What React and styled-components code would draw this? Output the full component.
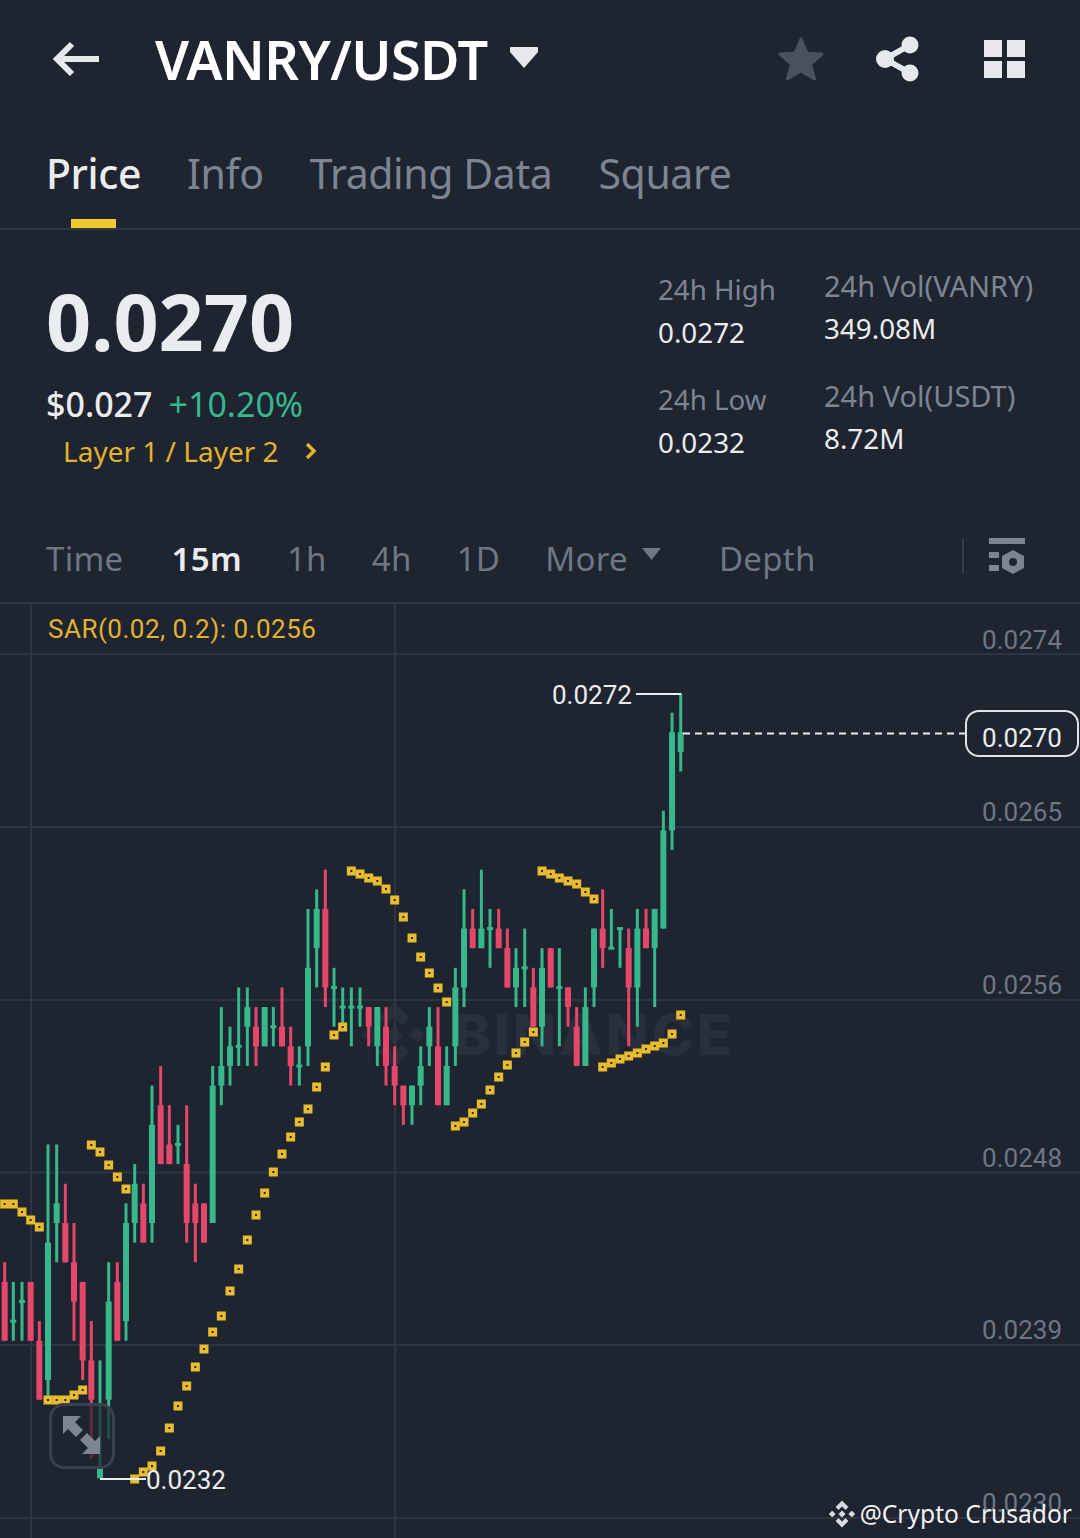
import React from 'react'
import styled, {createGlobalStyle} from 'styled-components'

const BG = '#1e2430'
const LINE = '#2e3440'
const GREEN = '#37b78a'
const RED = '#e5476a'
const DOT = '#e9bb2f'

const Global = createGlobalStyle`
	html, body {
		margin: 0;
		padding: 0;
		background: ${BG};
	}
	* {
		box-sizing: border-box;
	}
`
const Page = styled.div`
	width: 1080px;
	height: 1538px;
	display: flex;
	flex-direction: column;
	overflow: hidden;
	background: ${BG};
	color: #eaecef;
	font-family: 'Noto Sans', sans-serif;
`
const Header = styled.div`
	height: 120px;
	flex: none;
	display: flex;
	align-items: center;
	padding: 0 54px 2px 52px;
`
const Title = styled.div`
	margin-left: 55px;
	font-size: 54px;
	line-height: 60px;
	font-weight: 600;
	color: #fff;
	letter-spacing: -0.6px;
`
const Caret = styled.svg`
	margin-left: ${props => props.$gap}px;
	margin-top: ${props => props.$top}px;
	flex: none;
`
const IconRow = styled.div`
	margin-left: auto;
	display: flex;
	align-items: center;
	gap: 50px;
`
const GridIcon = styled.svg`
	margin-left: 13px;
`
const Tabs = styled.div`
	height: 110px;
	flex: none;
	display: flex;
	gap: 46px;
	padding-left: 46px;
	border-bottom: 2px solid ${LINE};
`
const Tab = styled.div`
	position: relative;
	font-size: 41px;
	line-height: 106px;
	height: 108px;
	font-weight: ${props => (props.$active ? 500 : 400)};
	color: ${props => (props.$active ? '#eaecef' : '#7d8492')};
	letter-spacing: -0.4px;
	${props =>
		props.$active &&
		`&::after {
			content: '';
			position: absolute;
			left: 25px;
			bottom: 0;
			width: 45px;
			height: 9px;
			background: #f0c92e;
		}`}
`
const Summary = styled.div`
	height: 286px;
	flex: none;
	display: flex;
	padding-left: 46px;
`
const PriceCol = styled.div`
	width: 612px;
	flex: none;
`
const BigPrice = styled.div`
	margin-top: 41px;
	font-size: 79px;
	line-height: 100px;
	font-weight: 700;
	color: #eaecef;
`
const SubRow = styled.div`
	margin-top: 11px;
	display: flex;
	gap: 16px;
	font-size: 34px;
	line-height: 44px;
	font-weight: 500;
`
const Change = styled.span`
	color: ${GREEN};
	font-weight: 400;
`
const Sector = styled.div`
	margin: 5px 0 0 17px;
	display: flex;
	align-items: center;
	gap: 26px;
	font-size: 28px;
	line-height: 40px;
	color: #e3b32f;
`
const StatCol = styled.div`
	width: ${props => props.$width}px;
	flex: none;
	padding-top: ${props => props.$top}px;
`
const Stat = styled.div`
	margin-bottom: 24px;
`
const StatLabel = styled.div`
	font-size: ${props => props.$size}px;
	line-height: 43px;
	color: #7d8492;
	white-space: nowrap;
`
const StatValue = styled.div`
	font-size: 27.8px;
	line-height: 43px;
	color: #eaecef;
	white-space: nowrap;
`
const Intervals = styled.div`
	height: 88px;
	flex: none;
	display: flex;
	align-items: center;
	gap: 45px;
	padding: 0 54px 0 46px;
	border-bottom: 2px solid ${LINE};
`
const Interval = styled.div`
	font-size: 33px;
	line-height: 86px;
	font-weight: ${props => (props.$active ? 600 : 400)};
	color: ${props => (props.$active ? '#eaecef' : '#6f7684')};
	letter-spacing: 0.3px;
	display: flex;
	align-items: center;
	margin-left: ${props => props.$shift || 0}px;
`
const Settings = styled.div`
	margin-left: auto;
	display: flex;
	align-items: center;
	gap: 25px;
	margin-top: -6px;
`
const Divider = styled.div`
	width: 2px;
	height: 36px;
	background: #353b47;
`
const Chart = styled.div`
	position: relative;
	flex: 1;
	min-height: 0;
`
const Plot = styled.svg`
	position: absolute;
	left: 0;
	top: 0;
	display: block;
`
const Watermark = styled.div`
	position: absolute;
	left: 358px;
	top: 395px;
	display: flex;
	align-items: center;
	gap: 23px;
	font-family: 'Inter', sans-serif;
	font-size: 57px;
	line-height: 72px;
	font-weight: 800;
	letter-spacing: 2.7px;
	color: #292f3b;
`
const Legend = styled.div`
	position: absolute;
	left: 48px;
	top: 8px;
	font-size: 26px;
	line-height: 34px;
	color: #e3b32f;
	font-family: 'Roboto', sans-serif;
	letter-spacing: 0.5px;
`
const PriceTag = styled.div`
	position: absolute;
	left: 965px;
	top: 106px;
	width: 114px;
	height: 47px;
	border: 2px solid #dfe2e7;
	border-radius: 14px;
	background: ${BG};
	padding-top: 7px;
	text-align: center;
	font-family: 'Roboto', sans-serif;
	font-size: 26px;
	line-height: 38px;
	color: #eaecef;
`
const Expand = styled.div`
	position: absolute;
	left: 49px;
	top: 799px;
	width: 66px;
	height: 66px;
	border: 3px solid #3a404c;
	border-radius: 15px;
	background: rgba(30, 36, 48, 0.72);
	display: flex;
	align-items: center;
	justify-content: center;
`
const Credit = styled.div`
	position: absolute;
	right: 8px;
	bottom: 6px;
	display: flex;
	align-items: center;
	gap: 3px;
	font-size: 24.6px;
	line-height: 36px;
	color: #f0f1f3;
	white-space: nowrap;
`

// price is in ticks of 0.0001
const priceY = p => 693 + (272 - p) * 19.63 - 604
const candleX = i => 48 + 8.667 * i

// g/r, high, body top, body bottom, low, from index -5
const candles = [
	['r', 243, 242, 239, 239],
	['g', 242, 240, 240, 239],
	['g', 242, 241, 241, 239],
	['r', 242, 242, 239, 239],
	['r', 240, 239, 236, 236],
	['g', 249, 244, 237, 236],
	['g', 249, 246, 245, 243],
	['r', 247, 245, 243, 243],
	['r', 245, 243, 241, 239],
	['r', 242, 242, 238, 237],
	['r', 240, 238, 236, 233],
	['g', 238, 232.5, 232, 232],
	['g', 243, 241, 236, 234],
	['r', 243, 242, 239, 239],
	['g', 246, 245, 240, 239],
	['g', 248, 247, 245, 244],
	['r', 247, 246, 244, 244],
	['g', 252, 250, 245, 244],
	['r', 253, 251, 248, 248],
	['r', 251, 249, 248, 248],
	['g', 250, 249, 249, 248],
	['r', 251, 248, 245, 244],
	['r', 247, 246, 245, 243],
	['r', 246, 246, 244, 244],
	['g', 253, 252, 245, 245],
	['g', 256, 253, 252, 251],
	['g', 255, 254, 253, 252],
	['g', 257, 254, 254, 253],
	['g', 257, 256, 255, 253],
	['r', 256, 255, 254, 253],
	['g', 256, 256, 254, 254],
	['g', 256, 255, 255, 254],
	['r', 257, 255, 254, 254],
	['r', 255, 254, 253, 252],
	['g', 254, 253, 253, 252],
	['g', 261, 258, 254, 253],
	['g', 262, 261, 259, 257],
	['r', 263, 261, 257, 256],
	['g', 258, 257, 257, 255],
	['g', 257, 256, 256, 255],
	['g', 257, 256, 256, 254],
	['g', 257, 256, 256, 255],
	['r', 256, 256, 255, 254],
	['g', 256, 256, 254, 253],
	['r', 256, 255, 253, 252],
	['r', 254, 253, 252, 251],
	['r', 252, 252, 251, 250],
	['g', 252, 252, 251, 250],
	['g', 254, 253, 252, 251],
	['g', 256, 255, 254, 253],
	['r', 256, 254, 251, 251],
	['g', 254, 253, 251, 251],
	['g', 258, 257, 254, 253],
	['g', 262, 260, 257, 256],
	['r', 261, 260, 259, 259],
	['g', 263, 260, 259, 259],
	['g', 261, 260, 260, 258],
	['r', 261, 260, 259, 259],
	['r', 260, 259, 257, 257],
	['g', 259, 258, 257, 256],
	['g', 260, 258, 258, 256],
	['r', 258, 257, 255, 255],
	['g', 259, 258, 255, 254],
	['r', 259, 259, 257, 257],
	['g', 259, 257, 257, 254],
	['r', 257, 257, 256, 255],
	['r', 256, 255, 253, 253],
	['g', 257, 256, 253, 253],
	['g', 260, 260, 257, 256],
	['r', 262, 260, 259, 258],
	['g', 261, 259, 259, 259],
	['g', 260, 260, 260, 258],
	['r', 260, 259, 257, 254],
	['g', 261, 260, 257, 255],
	['r', 261, 260, 259, 259],
	['g', 261, 261, 259, 256],
	['g', 266, 265, 260, 260],
	['g', 271, 270, 265, 264],
	['g', 272, 270, 269, 268]
]

// SAR dots by screen y, from index -5
const sar = [
	1204, 1204, 1212, 1220, 1227, 1400, 1400, 1400, 1395, 1390, 1145, 1152, 1165, 1177, 1189, 1479, 1472, 1466, 1451,
	1428, 1406, 1386, 1367, 1349, 1332, 1316, 1291, 1269, 1240, 1215, 1193, 1172, 1154, 1137, 1122, 1109, 1087, 1067,
	1035, 1027, 871, 874, 878, 881, 889, 900, 917, 938, 957, 973, 988, 1002, 1126, 1122, 1113, 1104, 1090, 1077, 1065,
	1053, 1042, 1032, 871, 874, 878, 881, 884, 892, 899, 1067, 1063, 1059, 1056, 1053, 1049, 1046, 1043, 1034, 1015
]

const gridY = [50, 223, 396, 568.5, 741, 914]
const axis = [
	['0.0274', 45],
	['0.0265', 217],
	['0.0256', 390],
	['0.0248', 563],
	['0.0239', 735],
	['0.0230', 908]
]

const Candle = ({index, data}) => {
	const [kind, high, top, bottom, low] = data
	const x = candleX(index)
	const fill = kind === 'g' ? GREEN : RED
	const bodyTop = priceY(top)
	const bodyHeight = Math.max(priceY(bottom) - bodyTop, 3)
	return (
		<g fill={fill}>
			<rect x={x - 1.5} y={priceY(high)} width={3} height={priceY(low) - priceY(high)} />
			<rect x={x - 3} y={top === bottom ? bodyTop - 1.5 : bodyTop} width={6} height={bodyHeight} />
		</g>
	)
}

const BinanceMark = ({size, color}) => (
	<svg width={size} height={size} viewBox="0 0 32 32" fill={color} stroke={color} strokeWidth="0.8">
		<path d="M16 2l6.5 6.5-2.8 2.8L16 7.6l-3.7 3.7-2.8-2.8z" />
		<path d="M16 30l-6.5-6.5 2.8-2.8 3.700 3.700 3.700-3.700 2.800 2.800z" />
		<path d="M5.6 12.8l3.2 3.2-3.2 3.2L2.4 16z" />
		<path d="M26.4 12.8l3.2 3.2-3.2 3.2-3.2-3.2z" />
		<path d="M16 12.6l3.4 3.4-3.4 3.4-3.4-3.4z" />
	</svg>
)

const App = () => (
	<Page>
		<Global />
		<Header>
			<svg width="48" height="36" viewBox="0 0 48 36" fill="none" stroke="#e6e8ec" strokeWidth="6">
				<path d="M47 18H5" />
				<path d="M20 3L5 18l15 15" />
			</svg>
			<Title>VANRY/USDT</Title>
			<Caret $gap={21} $top={-4} width="30" height="24" viewBox="0 0 30 24">
				<path d="M2 2h26a1 1 0 0 1 1 1v4L15 23 1 7V3a1 1 0 0 1 1-1z" fill="#e6e8ec" />
			</Caret>
			<IconRow>
				<svg width="48" height="48" viewBox="0 0 48 48">
					<path
						d="M24 4l6 14 15 1-11.500 10 4 15-13.500-8-13.500 8 4-15L3 19l15-1z"
						fill="#4a5060"
						stroke="#4a5060"
						strokeWidth="3"
						strokeLinejoin="round"
					/>
				</svg>
				<svg width="46" height="46" viewBox="0 0 46 46" fill="#e6e8ec">
					<circle cx="35" cy="9" r="8.500" />
					<circle cx="10" cy="23" r="9" />
					<circle cx="35" cy="37" r="8.500" />
					<path d="M10 23L35 9M10 23l25 14" stroke="#e6e8ec" strokeWidth="6" />
				</svg>
				<GridIcon width="42" height="40" viewBox="0 0 42 40" fill="#e6e8ec">
					<rect x="0" y="1" width="18" height="17" />
					<rect x="23" y="1" width="18" height="17" />
					<rect x="0" y="22" width="18" height="17" />
					<rect x="23" y="22" width="18" height="17" />
				</GridIcon>
			</IconRow>
		</Header>
		<Tabs>
			<Tab $active>Price</Tab>
			<Tab>Info</Tab>
			<Tab>Trading Data</Tab>
			<Tab>Square</Tab>
		</Tabs>
		<Summary>
			<PriceCol>
				<BigPrice>0.0270</BigPrice>
				<SubRow>
					<span>$0.027</span>
					<Change>+10.20%</Change>
				</SubRow>
				<Sector>
					Layer 1 / Layer 2
					<svg width="12" height="18" viewBox="0 0 12 18" fill="none" stroke="#e3b32f" strokeWidth="3.500">
						<path d="M2 2l7 7-7 7" />
					</svg>
				</Sector>
			</PriceCol>
			<StatCol $width={166} $top={38}>
				<Stat>
					<StatLabel $size={27.7}>24h High</StatLabel>
					<StatValue>0.0272</StatValue>
				</Stat>
				<Stat>
					<StatLabel $size={27.7}>24h Low</StatLabel>
					<StatValue>0.0232</StatValue>
				</Stat>
			</StatCol>
			<StatCol $width={240} $top={34}>
				<Stat>
					<StatLabel $size={29}>24h Vol(VANRY)</StatLabel>
					<StatValue>349.08M</StatValue>
				</Stat>
				<Stat>
					<StatLabel $size={29}>24h Vol(USDT)</StatLabel>
					<StatValue>8.72M</StatValue>
				</Stat>
			</StatCol>
		</Summary>
		<Intervals>
			<Interval>Time</Interval>
			<Interval $active $shift={3}>
				15m
			</Interval>
			<Interval>1h</Interval>
			<Interval>4h</Interval>
			<Interval>1D</Interval>
			<Interval>
				More
				<Caret $gap={13} $top={-10} width="21" height="14" viewBox="0 0 21 14">
					<path d="M1 1h19L10.500 13z" fill="#6f7684" />
				</Caret>
			</Interval>
			<Interval $shift={12}>Depth</Interval>
			<Settings>
				<Divider />
				<svg width="37" height="37" viewBox="0 0 37 37" fill="#7d8492">
					<rect x="0" y="0" width="36" height="6" />
					<rect x="0" y="14" width="10" height="6" />
					<rect x="0" y="27" width="10" height="6" />
					<path
						fillRule="evenodd"
						d="M24 12l11 6v12l-11 6-11-6V18zm0 8a4 4 0 1 0 0 8 4 4 0 0 0 0-8z"
					/>
				</svg>
			</Settings>
		</Intervals>
		<Chart>
			<Watermark>
				<BinanceMark size={72} color="#292f3b" />
				BINANCE
			</Watermark>
			<Plot width="1080" height="934" viewBox="0 0 1080 934">
				{gridY.map(y => (
					<line key={y} x1="0" x2="1080" y1={y} y2={y} stroke={LINE} strokeWidth="2" />
				))}
				<line x1="31" x2="31" y1="0" y2="934" stroke={LINE} strokeWidth="2" />
				<line x1="395" x2="395" y1="0" y2="934" stroke={LINE} strokeWidth="2" />
				{axis.map(([label, y]) => (
					<text
						key={label}
						x="1062"
						y={y}
						textAnchor="end"
						fontFamily="Roboto, sans-serif"
						fontSize="26"
						fill="#6f7684"
					>
						{label}
					</text>
				))}
				{candles.map((c, i) => (
					<Candle key={i} index={i - 5} data={c} />
				))}
				{sar.map((y, i) => (
					<rect
						key={i}
						x={candleX(i - 5) - 2.75}
						y={y - 604 - 2.75}
						width="5.5"
						height="5.5"
						fill="#2a2a24"
						stroke={DOT}
						strokeWidth="3.5"
					/>
				))}
				<path d="M636 90H681" fill="none" stroke="#eaecef" strokeWidth="2" />
				<path d="M100 875H146" fill="none" stroke="#eaecef" strokeWidth="2" />
				<line x1="683" x2="965" y1="129.500" y2="129.500" stroke="#eaecef" strokeWidth="2" strokeDasharray="7 5" />
				<text x="552" y="100" fontFamily="Roboto, sans-serif" fontSize="26" fill="#eaecef">
					0.0272
				</text>
				<text x="146" y="885" fontFamily="Roboto, sans-serif" fontSize="26" fill="#eaecef">
					0.0232
				</text>
			</Plot>
			<Legend>SAR(0.02, 0.2): 0.0256</Legend>
			<PriceTag>0.0270</PriceTag>
			<Expand>
				<svg width="42" height="42" viewBox="0 0 42 42" fill="#7d8492">
					<path d="M2 1H20L14 7L22 15L15 22L7 14L2 19z" />
					<path d="M39 39H21L27 33L19 25L26 18L34 26L39 21z" />
				</svg>
			</Expand>
			<Credit>
				<BinanceMark size={30} color="#d9dbe0" />
				@Crypto Crusador
			</Credit>
		</Chart>
	</Page>
)

export default App
